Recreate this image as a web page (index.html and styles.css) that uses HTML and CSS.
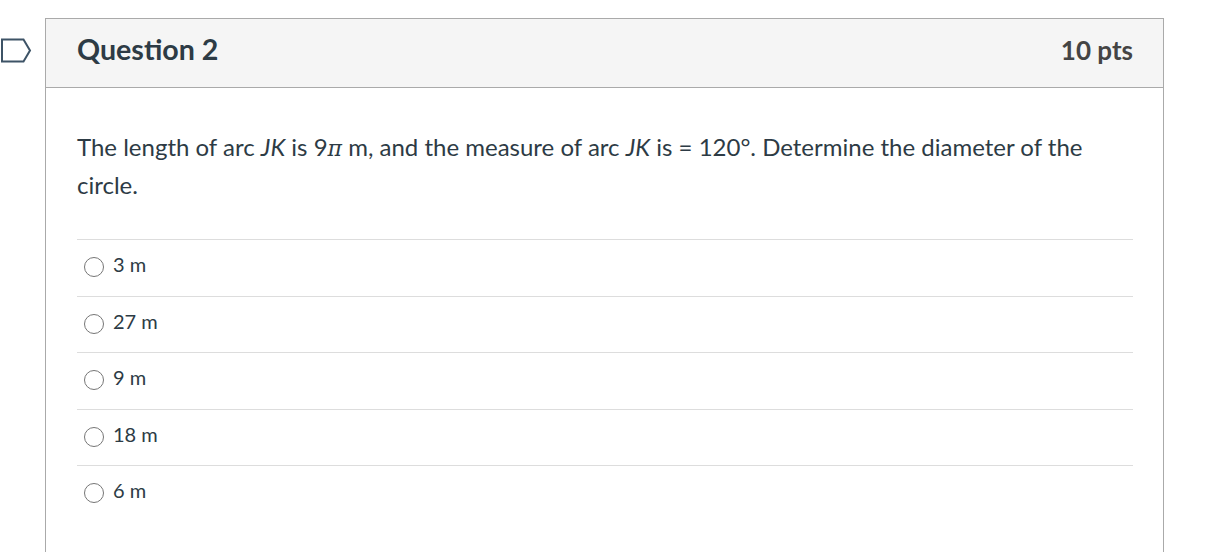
FILE: index.html
```html
<!DOCTYPE html>
<html lang="en">
<head>
<meta charset="utf-8">
<title>Question 2</title>
<link rel="stylesheet" href="styles.css">
</head>
<body>
<div class="page">
  <svg class="flag" width="32" height="25" viewBox="0 0 32 25" aria-hidden="true">
    <path d="M2 1.5 H23.5 L30 12.5 L23.5 23.5 H2 Z" fill="none" stroke="#3d5366" stroke-width="2" stroke-linejoin="miter"/>
  </svg>
  <div class="question">
    <div class="q-header">
      <h2 class="q-title">Question 2</h2>
      <span class="q-points">10 pts</span>
    </div>
    <div class="q-body">
      <p class="q-text">The length of arc <i>JK</i> is 9<i class="pi">π</i> m, and the measure of arc <i>JK</i> is = 120°. Determine the diameter of the circle.</p>
      <div class="answers">
        <label class="answer"><span class="radio"></span><span class="a-text">3 m</span></label>
        <label class="answer"><span class="radio"></span><span class="a-text">27 m</span></label>
        <label class="answer"><span class="radio"></span><span class="a-text">9 m</span></label>
        <label class="answer"><span class="radio"></span><span class="a-text">18 m</span></label>
        <label class="answer"><span class="radio"></span><span class="a-text">6 m</span></label>
      </div>
    </div>
  </div>
</div>
</body>
</html>
```
FILE: styles.css
```css
html, body {
  margin: 0;
  padding: 0;
  background: #ffffff;
}

body {
  font-family: Lato, "Open Sans", sans-serif;
  color: #2d3b45;
  overflow: hidden;
}

.page {
  position: relative;
  padding: 18px 0 0 45px;
  height: 534px;
}

.flag {
  position: absolute;
  left: 0;
  top: 38px;
}

.question {
  width: 1119px;
  box-sizing: border-box;
  border: 1px solid #aaaaaa;
  border-bottom: none;
  min-height: 600px;
}

.q-header {
  display: flex;
  align-items: baseline;
  justify-content: space-between;
  height: 55px;
  padding: 13px 30px 0 31px;
  background: #f5f5f5;
  border-bottom: 1px solid #aaaaaa;
}

.q-title {
  margin: 0;
  font-size: 28.6px;
  font-weight: 700;
  color: #2d3b45;
}

.q-points {
  font-size: 26px;
  font-weight: 700;
  color: #444444;
}

.q-body {
  padding: 41px 30px 0 31px;
}

.q-text {
  margin: 0 0 36px;
  font-size: 24px;
  line-height: 36px;
}

.q-text i {
  font-style: italic;
}

.q-text .pi {
  font-family: "DejaVu Serif", serif;
  font-style: italic;
  font-size: 22px;
}

.answers {
  display: flex;
  flex-direction: column;
}

.answer {
  display: flex;
  align-items: flex-start;
  gap: 9px;
  height: 55.5px;
  border-top: 1px solid #dddddd;
  padding-left: 7px;
  font-size: 20px;
}

.radio {
  width: 18px;
  height: 18px;
  margin-top: 17px;
  border: 1px solid #767676;
  border-radius: 50%;
  background: #fff;
  flex: none;
}

.a-text {
  font-family: Lato, sans-serif;
  line-height: 24px;
  padding-top: 12px;
}
```
